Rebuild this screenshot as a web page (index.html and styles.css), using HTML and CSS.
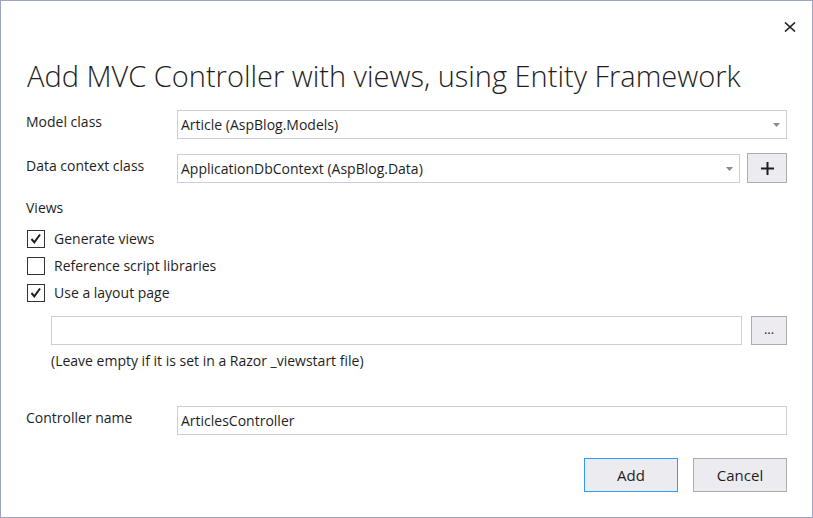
FILE: index.html
```html
<!DOCTYPE html>
<html>
<head>
<meta charset="utf-8">
<link rel="stylesheet" href="styles.css">
</head>
<body>
<div class="window">
  <div class="titlebar">
    <svg class="close" width="12" height="10" viewBox="0 0 12 10"><path d="M1 0.5 L11 9.5 M11 0.5 L1 9.5" stroke="#1e1e1e" stroke-width="1.6" fill="none"/></svg>
  </div>
  <h1 class="title">Add MVC Controller with views, using Entity Framework</h1>

  <div class="row row-model">
    <div class="label">Model class</div>
    <div class="combo grow">
      <span>Article (AspBlog.Models)</span>
      <svg class="arrow" width="7" height="4" viewBox="0 0 7 4"><path d="M0 0 H7 L3.5 4 Z" fill="#8a8a8a"/></svg>
    </div>
  </div>

  <div class="row row-data">
    <div class="label">Data context class</div>
    <div class="combo grow">
      <span>ApplicationDbContext (AspBlog.Data)</span>
      <svg class="arrow" width="7" height="4" viewBox="0 0 7 4"><path d="M0 0 H7 L3.5 4 Z" fill="#8a8a8a"/></svg>
    </div>
    <div class="btn btn-plus">
      <svg width="13" height="13" viewBox="0 0 13 13"><path d="M6.5 0 V13 M0 6.5 H13" stroke="#1e1e1e" stroke-width="2" fill="none"/></svg>
    </div>
  </div>

  <div class="section">Views</div>

  <div class="checks">
    <div class="check">
      <span class="box"><svg width="16" height="16" viewBox="0 0 16 16"><path d="M3.5 8 L6.3 11.3 L12 3.5" stroke="#1e1e1e" stroke-width="2" fill="none"/></svg></span>
      <span>Generate views</span>
    </div>
    <div class="check">
      <span class="box"></span>
      <span>Reference script libraries</span>
    </div>
    <div class="check">
      <span class="box"><svg width="16" height="16" viewBox="0 0 16 16"><path d="M3.5 8 L6.3 11.3 L12 3.5" stroke="#1e1e1e" stroke-width="2" fill="none"/></svg></span>
      <span>Use a layout page</span>
    </div>
  </div>

  <div class="row row-layout">
    <div class="input grow"></div>
    <div class="btn btn-browse">...</div>
  </div>
  <div class="hint">(Leave empty if it is set in a Razor _viewstart file)</div>

  <div class="row row-ctrl">
    <div class="label">Controller name</div>
    <div class="input grow"><span>ArticlesController</span></div>
  </div>

  <div class="actions">
    <div class="btn btn-action btn-default">Add</div>
    <div class="btn btn-action">Cancel</div>
  </div>
</div>
</body>
</html>
```
FILE: styles.css
```css
html, body {
  margin: 0;
  padding: 0;
  background: #ffffff;
}
.window {
  width: 813px;
  height: 518px;
  box-sizing: border-box;
  border: 1px solid #9ea3c6;
  padding: 0 25px 0 25px;
  font-family: "Open Sans", "Liberation Sans", sans-serif;
  font-size: 14px;
  color: #1e1e1e;
  display: flex;
  flex-direction: column;
  overflow: hidden;
}
.titlebar {
  display: flex;
  justify-content: flex-end;
  padding-top: 21px;
  margin-right: -9px;
  height: 10px;
}
.title {
  margin: 24px 0 0 1px;
  font-size: 29px;
  font-weight: 300;
  line-height: 40px;
  white-space: nowrap;
  color: #1e1e1e;
}
.row {
  display: flex;
  align-items: flex-end;
}
.label {
  width: 151px;
  flex: none;
  line-height: 20px;
  align-self: center;
  padding-bottom: 5px;
}
.grow {
  flex: 1;
}
.combo, .input {
  box-sizing: border-box;
  height: 29px;
  border: 1px solid #cccedb;
  background: #fff;
  display: flex;
  align-items: center;
  padding: 0 6px 0 3px;
  white-space: nowrap;
}
.combo span, .input span {
  flex: 1;
}
.arrow {
  flex: none;
  margin-top: 1px;
}
.row-model { margin-top: 14px; }
.row-data { margin-top: 14px; }
.btn {
  box-sizing: border-box;
  background: #ececf0;
  border: 1px solid #adadad;
  display: flex;
  align-items: center;
  justify-content: center;
}
.btn-plus {
  width: 40px;
  height: 30px;
  margin-left: 7px;
}
.section {
  margin-top: 15px;
  line-height: 20px;
}
.checks {
  margin-top: 12px;
  display: flex;
  flex-direction: column;
  gap: 9px;
  margin-left: 1px;
}
.check {
  display: flex;
  align-items: center;
  height: 18px;
  line-height: 18px;
}
.box {
  box-sizing: border-box;
  width: 18px;
  height: 18px;
  border: 1px solid #333337;
  margin-right: 9px;
  display: flex;
  align-items: center;
  justify-content: center;
}
.row-layout {
  margin-top: 14px;
  margin-left: 25px;
}
.btn-browse {
  width: 36px;
  height: 29px;
  margin-left: 9px;
  font-size: 13px;
  padding-bottom: 4px;
}
.hint {
  margin-top: 6px;
  margin-left: 25px;
  line-height: 20px;
}
.row-ctrl { margin-top: 35px; }
.actions {
  margin-top: 23px;
  display: flex;
  justify-content: flex-end;
  gap: 15px;
}
.btn-action {
  width: 94px;
  height: 34px;
  font-size: 15px;
}
.btn-default {
  border-color: #3399ff;
}
```
